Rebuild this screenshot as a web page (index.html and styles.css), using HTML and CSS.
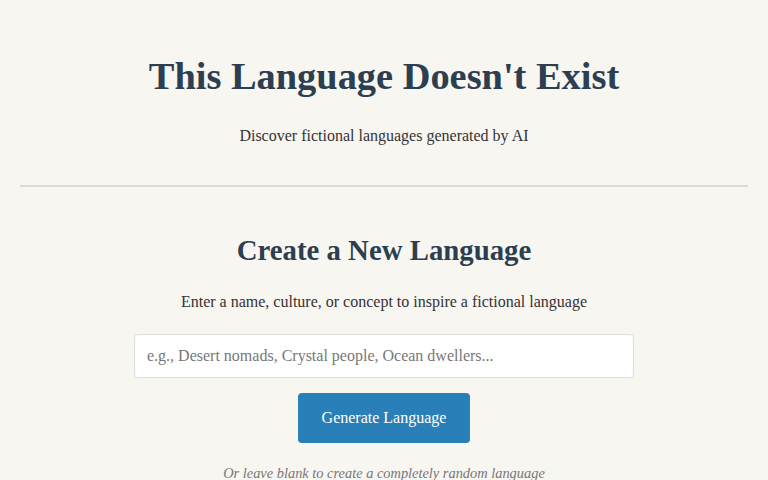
FILE: index.html
```html
<!DOCTYPE html>
<html lang="en">
<head>
    <meta charset="UTF-8">
    <meta name="viewport" content="width=device-width, initial-scale=1.0">
    <title>This Language Doesn't Exist</title>
    <link rel="stylesheet" href="styles.css">
</head>
<body>
    <div class="page">
        <header class="header">
            <h1 class="title">This Language Doesn't Exist</h1>
            <p class="tagline">Discover fictional languages generated by AI</p>
        </header>

        <section class="create">
            <h2 class="create-title">Create a New Language</h2>
            <p class="create-text">Enter a name, culture, or concept to inspire a fictional language</p>
            <form class="create-form" onsubmit="return false">
                <input type="text" class="prompt" placeholder="e.g., Desert nomads, Crystal people, Ocean dwellers...">
                <button type="submit" class="btn">Generate Language</button>
            </form>
            <p class="hint">Or leave blank to create a completely random language</p>
        </section>
    </div>
</body>
</html>
```

FILE: styles.css
```css
body {
    margin: 0;
    background-color: #f8f6f1;
    color: #333;
    font-family: "Liberation Serif", "Times New Roman", serif;
}
.page {
    padding: 0 20px;
}
.header {
    padding-top: 53px;
    padding-bottom: 40px;
    border-bottom: 2px solid #dcdad4;
    text-align: center;
}
.title {
    margin: 0;
    font-size: 38.4px;
    line-height: 46px;
    color: #2c3e50;
}
.tagline {
    margin: 28px 0 0;
    font-size: 16px;
    line-height: 18px;
}
.create {
    padding-top: 46px;
    text-align: center;
}
.create-title {
    margin: 0;
    font-size: 28.8px;
    line-height: 34px;
    color: #2c3e50;
}
.create-text {
    margin: 26px 0 0;
    font-size: 16px;
    line-height: 18px;
}
.create-form {
    display: flex;
    flex-direction: column;
    align-items: center;
    gap: 15px;
    margin-top: 23px;
}
.prompt {
    box-sizing: border-box;
    width: 500px;
    height: 44px;
    padding: 0 12px;
    border: 1px solid #ddd;
    border-radius: 4px;
    background: #fff;
    font-family: inherit;
    font-size: 16px;
    color: #333;
}
.prompt::placeholder {
    color: #777;
}
.btn {
    box-sizing: border-box;
    height: 50px;
    padding: 0 24px;
    border: none;
    border-radius: 4px;
    background-color: #2980b9;
    color: #fff;
    font-family: inherit;
    font-size: 16px;
    cursor: pointer;
}
.hint {
    margin: 21px 0 0;
    font-size: 14.4px;
    line-height: 18px;
    font-style: italic;
    color: #777;
}
```
